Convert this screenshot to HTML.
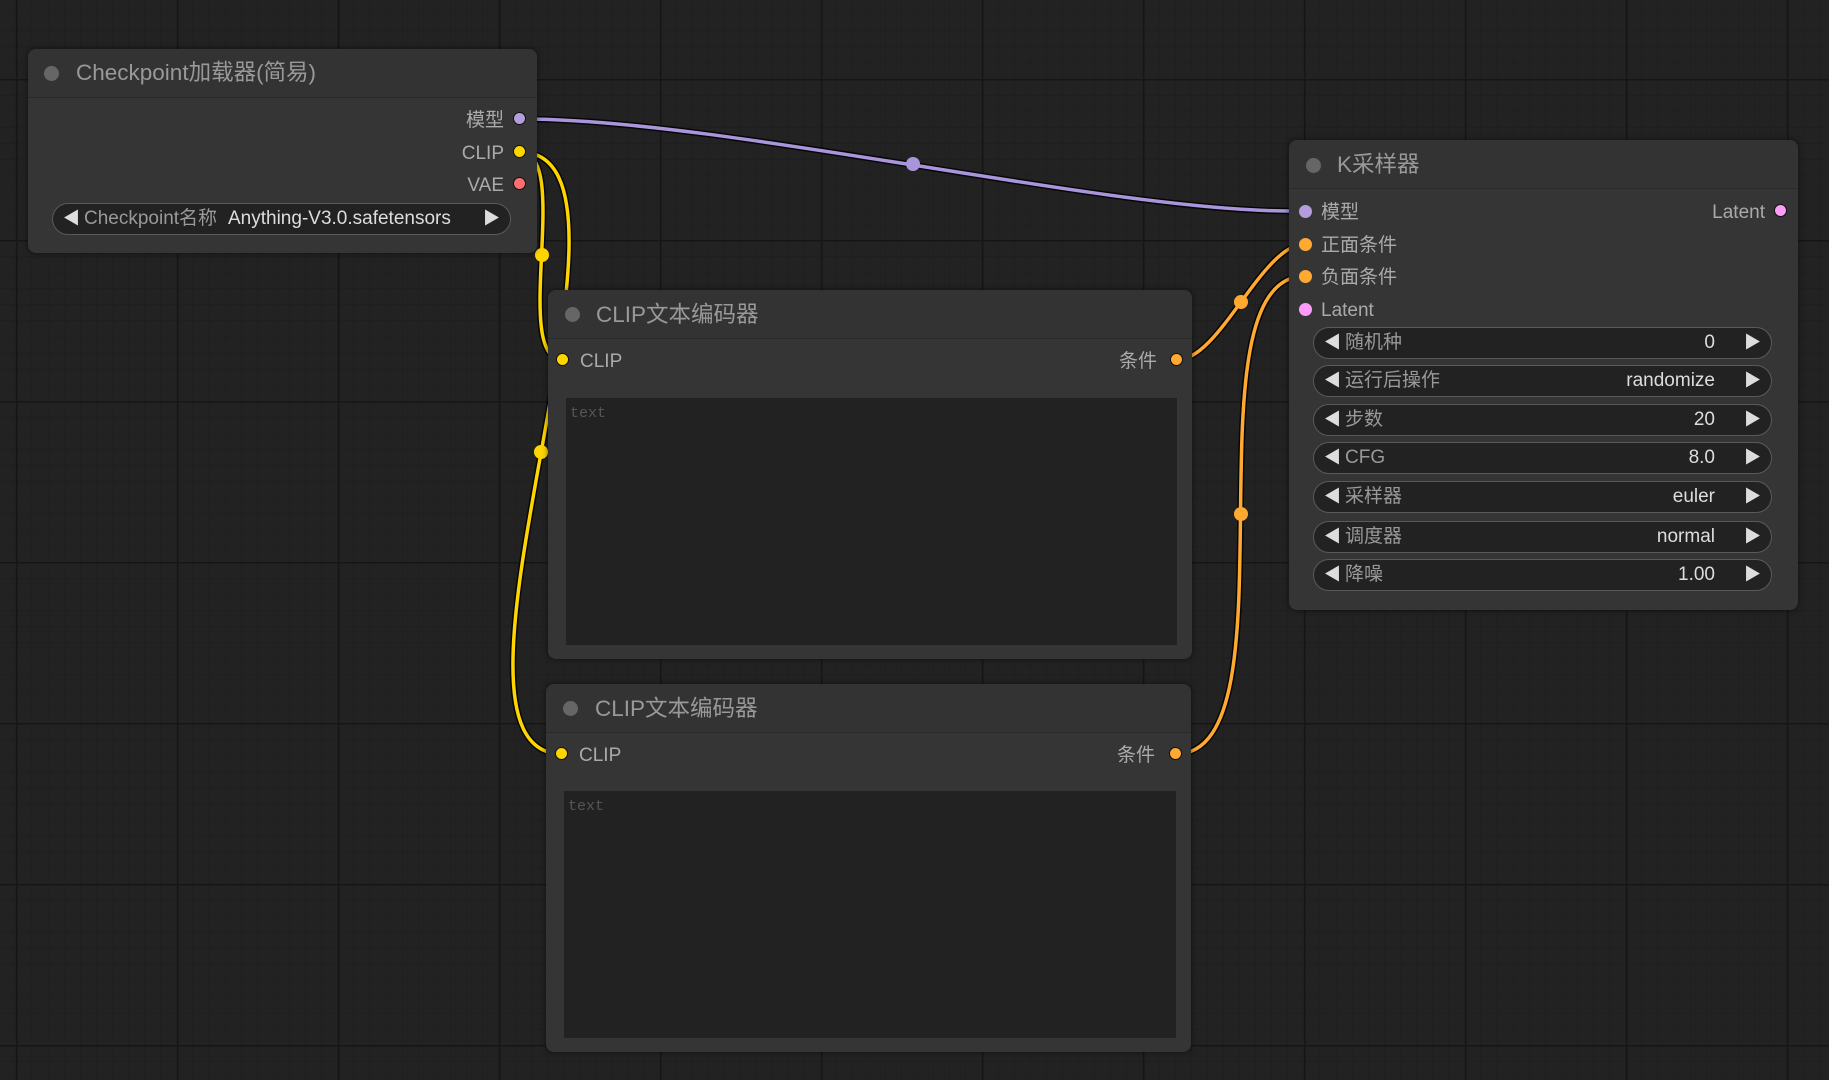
<!DOCTYPE html>
<html><head><meta charset="utf-8"><style>
*{margin:0;padding:0;box-sizing:border-box}
body{width:1829px;height:1080px;overflow:hidden;background:#222;font-family:"Liberation Sans","Noto Sans CJK SC",sans-serif;position:relative}
svg{position:absolute;left:0;top:0}
.node{position:absolute;background:#353535;border-radius:8px;box-shadow:0 0 6px rgba(0,0,0,.55)}
.tb{position:absolute;left:0;right:0;top:0;border-bottom:1px solid #2a2a2a;border-radius:8px 8px 0 0;background:#333}
.tdot{position:absolute;width:15px;height:15px;border-radius:50%;background:#666}
.tt{position:absolute;color:#999;font-size:22.5px;line-height:26px;white-space:nowrap}
.lbl{position:absolute;color:#aaa;font-size:19px;line-height:22px;white-space:nowrap;margin-top:2px}
.dot{position:absolute;width:13px;height:13px;border-radius:50%;border:1.5px solid #111}
.w{position:absolute;height:32px;background:#222;border:1.5px solid #5a5a5a;border-radius:16px;font-size:19px;line-height:30px;color:#999;white-space:nowrap}
.w .l{position:absolute;left:10px;color:#ddd;font-size:17px}
.w .r{position:absolute;right:10px;color:#ddd;font-size:17px}
.w .n{position:absolute;left:31px}
.w .v{position:absolute;right:56px;color:#ddd}
.ta{position:absolute;background:#222;color:#555;font-family:"Liberation Mono",monospace;font-size:15px;padding:7px 4px}
</style></head><body>
<svg width="1829" height="1080">
<defs>
<pattern id="g1" x="0" y="-1" width="16.1" height="16.1" patternUnits="userSpaceOnUse"><path d="M16.1 0V16.1H0" fill="none" stroke="#1c1c1c" stroke-width="1"/></pattern>
<pattern id="g2" x="16" y="79" width="161" height="161" patternUnits="userSpaceOnUse"><path d="M0 0V161M0 0H161" fill="none" stroke="#161616" stroke-width="3"/></pattern>
</defs>
<rect width="1829" height="1080" fill="#222"/>
<rect width="1829" height="1080" fill="url(#g1)"/>
<rect width="1829" height="1080" fill="url(#g2)"/>
<g fill="none" stroke-linecap="round">
<g stroke="#000" stroke-width="6.5" opacity=".8">
<path d="M522 119C725 119 1106 211 1289 211"/>
<path d="M520 152C573 152 510 360 563 360"/>
<path d="M520 152C671 152 411 754 562 754"/>
<path d="M1177 360C1220 360 1262 244 1305 244"/>
<path d="M1176 754C1300 754 1181 276 1305 276"/>
</g>
<path d="M522 119C725 119 1106 211 1289 211" stroke="#a895dc" stroke-width="3.5"/>
<path d="M520 152C573 152 510 360 563 360" stroke="#ffd500" stroke-width="3.5"/>
<path d="M520 152C671 152 411 754 562 754" stroke="#ffd500" stroke-width="3.5"/>
<path d="M1177 360C1220 360 1262 244 1305 244" stroke="#ffa931" stroke-width="3.5"/>
<path d="M1176 754C1300 754 1181 276 1305 276" stroke="#ffa931" stroke-width="3.5"/>
</g>
<circle cx="913" cy="164" r="7" fill="#a895dc"/>
<circle cx="542" cy="255" r="7" fill="#ffd500"/>
<circle cx="541" cy="452" r="7" fill="#ffd500"/>
<circle cx="1241" cy="302" r="7" fill="#ffa931"/>
<circle cx="1241" cy="514" r="7" fill="#ffa931"/>
</svg>

<div class="node" style="left:28px;top:49px;width:509px;height:204px">
<div class="tb" style="height:49px"></div>
<div class="tdot" style="left:16px;top:17px"></div>
<div class="tt" style="left:48px;top:11px">Checkpoint加载器(简易)</div>
<div class="lbl" style="right:33px;top:59px">模型</div>
<div class="lbl" style="right:33px;top:92px">CLIP</div>
<div class="lbl" style="right:33px;top:124px">VAE</div>
<div class="dot" style="left:485px;top:63px;background:#b39ddb"></div>
<div class="dot" style="left:485px;top:96px;background:#ffd500"></div>
<div class="dot" style="left:485px;top:128px;background:#ff6e6e"></div>
<div class="w" style="left:24px;top:154px;width:459px"><span class="l">◀</span><span class="n">Checkpoint名称</span><span style="position:absolute;left:175px;color:#ddd">Anything-V3.0.safetensors</span><span class="r">▶</span></div>
</div>

<div class="node" style="left:548px;top:290px;width:644px;height:369px">
<div class="tb" style="height:49px"></div>
<div class="tdot" style="left:17px;top:17px"></div>
<div class="tt" style="left:48px;top:12px">CLIP文本编码器</div>
<div class="dot" style="left:8px;top:63px;background:#ffd500"></div>
<div class="lbl" style="left:32px;top:59px">CLIP</div>
<div class="lbl" style="right:35px;top:59px">条件</div>
<div class="dot" style="left:622px;top:63px;background:#ffa931"></div>
<div class="ta" style="left:18px;top:108px;width:611px;height:247px">text</div>
</div>

<div class="node" style="left:546px;top:684px;width:645px;height:368px">
<div class="tb" style="height:49px"></div>
<div class="tdot" style="left:17px;top:17px"></div>
<div class="tt" style="left:49px;top:12px">CLIP文本编码器</div>
<div class="dot" style="left:9px;top:63px;background:#ffd500"></div>
<div class="lbl" style="left:33px;top:59px">CLIP</div>
<div class="lbl" style="right:36px;top:59px">条件</div>
<div class="dot" style="left:623px;top:63px;background:#ffa931"></div>
<div class="ta" style="left:18px;top:107px;width:612px;height:247px">text</div>
</div>

<div class="node" style="left:1289px;top:140px;width:509px;height:470px">
<div class="tb" style="height:49px"></div>
<div class="tdot" style="left:17px;top:18px"></div>
<div class="tt" style="left:48px;top:12px">K采样器</div>
<div class="dot" style="left:10px;top:65px;background:#b39ddb;border:none"></div>
<div class="dot" style="left:10px;top:98px;background:#ffa931;border:none"></div>
<div class="dot" style="left:10px;top:130px;background:#ffa931;border:none"></div>
<div class="dot" style="left:10px;top:163px;background:#ff9cf9;border:none"></div>
<div class="lbl" style="left:32px;top:60px">模型</div>
<div class="lbl" style="left:32px;top:93px">正面条件</div>
<div class="lbl" style="left:32px;top:125px">负面条件</div>
<div class="lbl" style="left:32px;top:158px">Latent</div>
<div class="lbl" style="right:33px;top:60px">Latent</div>
<div class="dot" style="left:485px;top:64px;background:#ff9cf9"></div>
<div class="w" style="left:24px;top:187px;width:459px"><span class="l">◀</span><span class="n">随机种</span><span class="v">0</span><span class="r">▶</span></div>
<div class="w" style="left:24px;top:225px;width:459px"><span class="l">◀</span><span class="n">运行后操作</span><span class="v">randomize</span><span class="r">▶</span></div>
<div class="w" style="left:24px;top:264px;width:459px"><span class="l">◀</span><span class="n">步数</span><span class="v">20</span><span class="r">▶</span></div>
<div class="w" style="left:24px;top:302px;width:459px"><span class="l">◀</span><span class="n">CFG</span><span class="v">8.0</span><span class="r">▶</span></div>
<div class="w" style="left:24px;top:341px;width:459px"><span class="l">◀</span><span class="n">采样器</span><span class="v">euler</span><span class="r">▶</span></div>
<div class="w" style="left:24px;top:381px;width:459px"><span class="l">◀</span><span class="n">调度器</span><span class="v">normal</span><span class="r">▶</span></div>
<div class="w" style="left:24px;top:419px;width:459px"><span class="l">◀</span><span class="n">降噪</span><span class="v">1.00</span><span class="r">▶</span></div>
</div>
</body></html>
